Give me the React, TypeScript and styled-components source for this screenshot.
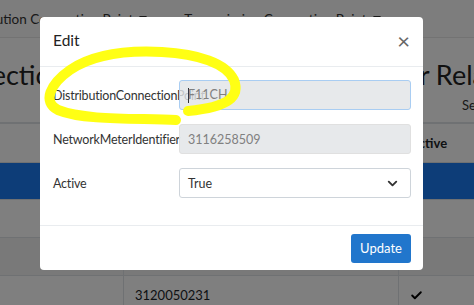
import React from 'react'
import styled, { createGlobalStyle } from 'styled-components'
import { ChevronDown, Check } from 'lucide-react'

const GlobalStyle = createGlobalStyle`
  html, body {
    margin: 0;
    padding: 0;
    width: 474px;
    height: 305px;
    overflow: hidden;
    background: #ffffff;
    font-family: Lato, "Noto Sans", sans-serif;
    color: #212529;
  }
`

const Page = styled.div`
  position: relative;
  width: 474px;
  height: 305px;
  overflow: hidden;
  background: #ffffff;
`

const NavBar = styled.div`
  height: 37px;
  display: flex;
  align-items: center;
  gap: 37px;
  border-bottom: 1px solid #e6e6e6;
  background: #fafafa;
  font-size: 13.5px;
  white-space: nowrap;
`

const NavItem = styled.div<{ $shift?: number }>`
  margin-left: ${p => p.$shift || 0}px;
  color: #333;
  display: flex;
  align-items: center;
  gap: 6px;
  &::after {
    content: '';
    border-left: 4px solid transparent;
    border-right: 4px solid transparent;
    border-top: 5px solid #333;
  }
`

const Headings = styled.div`
  display: flex;
  height: 84px;
  white-space: nowrap;
`

const HeadingLeft = styled.div`
  width: 363px;
  flex: none;
`

const HeadingRight = styled.div`
  display: flex;
  flex-direction: column;
`

const BigTitle = styled.div<{ $shift?: number }>`
  font-size: 27px;
  line-height: 36px;
  margin-top: 19px;
  margin-left: ${p => p.$shift || 0}px;
  color: #222;
`

const SubText = styled.div`
  font-size: 13px;
  margin-left: 99px;
  margin-top: 4px;
  color: #333;
`

const Table = styled.div`
  border-top: 2px solid #dee2e6;
`

const Row = styled.div<{ $bg: string; $h: number }>`
  display: grid;
  grid-template-columns: 123px 275px 1fr;
  height: ${p => p.$h}px;
  background: ${p => p.$bg};
  border-bottom: 1px solid #dee2e6;
`

const Cell = styled.div<{ $bold?: boolean }>`
  display: flex;
  align-items: center;
  padding-left: 11px;
  border-left: 1px solid #dee2e6;
  font-size: 13px;
  font-weight: ${p => (p.$bold ? 700 : 400)};
  white-space: nowrap;
  overflow: hidden;
  &:first-child {
    border-left: none;
  }
`

const Backdrop = styled.div`
  position: absolute;
  inset: 0;
  background: rgba(0, 0, 0, 0.5);
`

const Modal = styled.div`
  position: absolute;
  left: 40px;
  top: 17px;
  width: 383px;
  height: 253px;
  background: #fff;
  border-radius: 4px;
  display: flex;
  flex-direction: column;
`

const ModalHeader = styled.div`
  height: 49px;
  border-bottom: 1px solid #e9ecef;
  display: flex;
  align-items: center;
  justify-content: space-between;
  padding: 0 13px 0 13px;
`

const Title = styled.div`
  font-size: 15.5px;
  color: #222;
  margin-top: -4px;
`

const Close = styled.div`
  font-size: 22px;
  color: #666;
  margin-top: -1px;
  line-height: 1;
`

const ModalBody = styled.div`
  flex: 1;
  padding: 13px 12px 0 13px;
  display: flex;
  flex-direction: column;
  gap: 14px;
  border-bottom: 1px solid #e9ecef;
`

const FormRow = styled.div`
  display: flex;
  align-items: center;
  height: 30px;
`

const Label = styled.div`
  width: 126px;
  flex: none;
  font-size: 12.5px;
  letter-spacing: -0.2px;
  color: #333;
  white-space: nowrap;
  overflow: visible;
`

const Field = styled.div<{ $focus?: boolean; $disabled?: boolean }>`
  flex: 1;
  height: 30px;
  box-sizing: border-box;
  display: flex;
  align-items: center;
  padding: 0 10px 0 8px;
  border-radius: 3px;
  font-size: 12.5px;
  color: ${p => (p.$disabled ? '#808080' : '#333')};
  background: ${p => (p.$disabled ? 'rgba(226, 228, 230, 0.82)' : '#fff')};
  border: 1px solid ${p => (p.$focus ? '#a9cdf2' : p.$disabled ? '#e0e0e0' : '#ced4da')};
  justify-content: space-between;
`

const Caret = styled.span`
  display: inline-block;
  width: 1px;
  height: 15px;
  background: #333;
  margin-right: -1px;
  vertical-align: middle;
`

const ModalFooter = styled.div`
  height: 44px;
  display: flex;
  align-items: center;
  justify-content: flex-end;
  padding-right: 12px;
`

const Button = styled.div`
  width: 60px;
  height: 29px;
  border-radius: 3px;
  background: #2176cc;
  color: #fff;
  font-size: 13px;
  display: flex;
  align-items: center;
  justify-content: center;
`

const Scribble = styled.svg`
  position: absolute;
  left: 0;
  top: 0;
  pointer-events: none;
`

const App = () => {
  return (
    <>
      <GlobalStyle />
      <Page>
        <NavBar>
          <NavItem $shift={-44}>Distribution Connection Point</NavItem>
          <NavItem>Transmission Connection Point</NavItem>
        </NavBar>
        <Headings>
          <HeadingLeft>
            <BigTitle $shift={-220}>Distribution Connection Points</BigTitle>
          </HeadingLeft>
          <HeadingRight>
            <BigTitle $shift={-6}>Meter Relation</BigTitle>
            <SubText>Search</SubText>
          </HeadingRight>
        </Headings>
        <Table>
          <Row $bg="#ffffff" $h={38}>
            <Cell $bold />
            <Cell $bold>NetworkMeterIdentifier</Cell>
            <Cell $bold>Active</Cell>
          </Row>
          <Row $bg="#1a7af0" $h={36}>
            <Cell />
            <Cell />
            <Cell />
          </Row>
          <Row $bg="#ffffff" $h={37}>
            <Cell />
            <Cell />
            <Cell />
          </Row>
          <Row $bg="#f3f3f3" $h={37}>
            <Cell />
            <Cell />
            <Cell />
          </Row>
          <Row $bg="#ffffff" $h={38}>
            <Cell />
            <Cell>3120050231</Cell>
            <Cell>
              <Check size={13} strokeWidth={3.5} color="#000" />
            </Cell>
          </Row>
        </Table>
        <Backdrop />
        <Modal>
          <ModalHeader>
            <Title>Edit</Title>
            <Close>×</Close>
          </ModalHeader>
          <ModalBody>
            <FormRow>
              <Label>DistributionConnectionPoint</Label>
              <Field $focus $disabled>
                <span>
                  <Caret />
                  F11CH
                </span>
              </Field>
            </FormRow>
            <FormRow>
              <Label>NetworkMeterIdentifier</Label>
              <Field $disabled>3116258509</Field>
            </FormRow>
            <FormRow>
              <Label>Active</Label>
              <Field>
                True
                <ChevronDown size={15} strokeWidth={3} color="#333" />
              </Field>
            </FormRow>
          </ModalBody>
          <ModalFooter>
            <Button>Update</Button>
          </ModalFooter>
        </Modal>
        <Scribble width="474" height="305" viewBox="0 0 474 305">
          <path
            d="M176 120 C140 118 85 121 58 110 C42 102 50 84 70 70 C92 55 125 50 162 52 C198 54 226 63 234 80 C240 96 230 107 188 111"
            fill="none"
            stroke="#ffff14"
            strokeWidth="10"
            strokeLinecap="round"
            strokeLinejoin="round"
          />
        </Scribble>
      </Page>
    </>
  )
}

export default App
